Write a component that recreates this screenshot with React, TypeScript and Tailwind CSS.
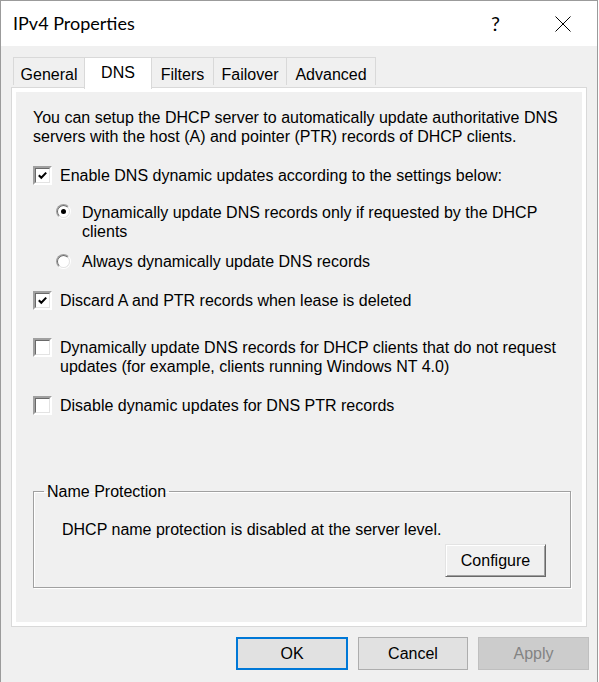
import React from 'react';

const body = "font-['Liberation_Sans',Arial,sans-serif]";

function CheckBox({ checked }: { checked?: boolean }) {
  return (
    <span className="shrink-0 w-[19px] h-[19px] border-2 border-t-[#a0a0a0] border-l-[#a0a0a0] border-b-white border-r-white flex">
      <span className="flex-1 border border-t-[#696969] border-l-[#696969] border-b-[#e3e3e3] border-r-[#e3e3e3] bg-white flex items-center justify-center">
        {checked && (
          <svg width="11" height="11" viewBox="0 0 11 11">
            <path d="M1.8 5.2 L4.3 7.8 L9.2 2.6" fill="none" stroke="#000" strokeWidth="2" />
          </svg>
        )}
      </span>
    </span>
  );
}

function Radio({ checked }: { checked?: boolean }) {
  return (
    <span className="shrink-0 w-[15px] h-[15px] rounded-full border-[1.5px] border-t-[#a0a0a0] border-l-[#a0a0a0] border-b-white border-r-white flex">
      <span className="flex-1 rounded-full border border-t-[#696969] border-l-[#696969] border-b-[#e3e3e3] border-r-[#e3e3e3] bg-white flex items-center justify-center">
        {checked && <span className="w-[5px] h-[5px] rounded-full bg-black" />}
      </span>
    </span>
  );
}

function Tab({ label, width, active, cls }: { label: string; width: string; active?: boolean; cls: string }) {
  if (active) {
    return (
      <div className={`${width} h-[32px] bg-white border-t border-l border-r border-[#d9d9d9] flex items-center justify-center pb-[3px]`}>
        {label}
      </div>
    );
  }
  return (
    <div className={`${width} h-[28px] mb-[4px] bg-[#f0f0f0] border-[#d9d9d9] ${cls} flex items-center justify-center pt-[6px]`}>
      {label}
    </div>
  );
}

export default function App() {
  return (
    <div className="w-[599px] h-[682px] bg-white">
      <div className={`w-[598px] h-[682px] border-l border-t border-r border-[#9b9b9b] bg-[#f0f0f0] flex flex-col text-[16px] leading-[19px] text-black ${body}`}>
        {/* title bar */}
        <div className="h-[45px] shrink-0 bg-white flex items-center">
          <span className="pl-[12px] text-[18px] font-['Lato','Noto_Sans',sans-serif] pb-[1px]">IPv4 Properties</span>
          <span className="flex-1" />
          <span className="w-[69px] h-full flex items-center justify-center text-[20px] font-['Lato','Noto_Sans',sans-serif] pl-[2px]">?</span>
          <span className="w-[68px] h-full flex items-center justify-center">
            <svg width="16" height="16" viewBox="0 0 16 16">
              <path d="M0.5 0.5 L15.5 15.5 M15.5 0.5 L0.5 15.5" stroke="#000" strokeWidth="1" fill="none" />
            </svg>
          </span>
        </div>

        {/* tabs */}
        <div className="mt-[11px] ml-[12px] h-[32px] flex items-end relative z-10 -mb-[2px]">
          <Tab label="General" width="w-[71px]" cls="border-l border-t" />
          <Tab label="DNS" width="w-[68px]" active cls="" />
          <Tab label="Filters" width="w-[61px]" cls="border-t" />
          <Tab label="Failover" width="w-[73px]" cls="border-l border-t" />
          <Tab label="Advanced" width="w-[90px]" cls="border-l border-t border-r" />
        </div>

        {/* panel */}
        <div className="ml-[10px] w-[576px] h-[540px] shrink-0 border border-[#d9d9d9] bg-white p-[4px]">
          <div className="h-full bg-[#f0f0f0] pl-[17px] pt-[16px] flex flex-col">
            <p>
              You can setup the DHCP server to automatically update authoritative DNS
              <br />
              servers with the host (A) and pointer (PTR) records of DHCP clients.
            </p>

            <div className="mt-[20px] flex items-center gap-[8px]">
              <CheckBox checked />
              <span>Enable DNS dynamic updates according to the settings below:</span>
            </div>

            <div className="mt-[18px] ml-[23px] flex items-start gap-[11px]">
              <span className="mt-[1px] flex">
                <Radio checked />
              </span>
              <span>
                Dynamically update DNS records only if requested by the DHCP
                <br />
                clients
              </span>
            </div>

            <div className="mt-[11px] ml-[23px] flex items-center gap-[11px]">
              <Radio />
              <span>Always dynamically update DNS records</span>
            </div>

            <div className="mt-[20px] flex items-center gap-[8px]">
              <CheckBox checked />
              <span>Discard A and PTR records when lease is deleted</span>
            </div>

            <div className="mt-[28px] flex items-start gap-[8px]">
              <CheckBox />
              <span>
                Dynamically update DNS records for DHCP clients that do not request
                <br />
                updates (for example, clients running Windows NT 4.0)
              </span>
            </div>

            <div className="mt-[20px] flex items-center gap-[8px]">
              <CheckBox />
              <span>Disable dynamic updates for DNS PTR records</span>
            </div>

            <fieldset className="mt-[67px] w-[538px] border border-[#a0a0a0] shadow-[inset_1px_1px_0_#fff,1px_1px_0_#fff]">
              <legend className="ml-[10px] px-[3px]">Name Protection</legend>
              <div className="flex flex-col pl-[28px] pr-[24px] pb-[10px]">
                <span className="mt-[19px]">DHCP name protection is disabled at the server level.</span>
                <button className="mt-[5px] self-end w-[101px] h-[33px] bg-[#f0f0f0] border border-t-[#e3e3e3] border-l-[#e3e3e3] border-b-[#696969] border-r-[#696969] shadow-[inset_1px_1px_0_#fff,inset_-1px_-1px_0_#a0a0a0]">
                  Configure
                </button>
              </div>
            </fieldset>
          </div>
        </div>

        {/* buttons */}
        <div className="mt-[10px] flex justify-end gap-[10px] pr-[8px]">
          <button className="w-[112px] h-[33px] bg-[#e1e1e1] border-2 border-[#0078d7]">OK</button>
          <button className="w-[110px] h-[33px] bg-[#e1e1e1] border border-[#adadad]">Cancel</button>
          <button className="w-[111px] h-[33px] bg-[#cccccc] border border-[#bfbfbf] text-[#838383]">Apply</button>
        </div>
      </div>
    </div>
  );
}
